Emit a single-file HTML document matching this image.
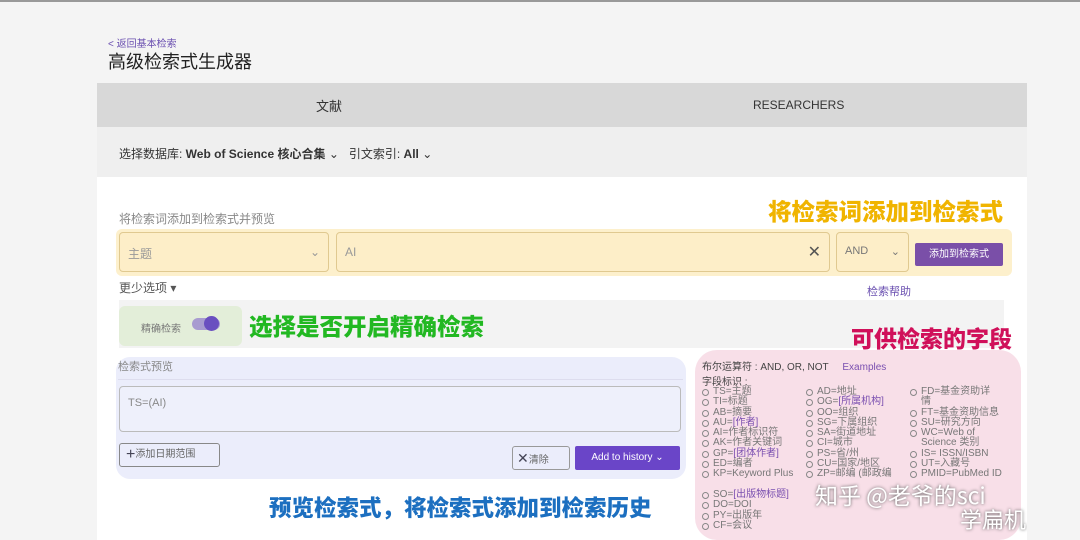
<!DOCTYPE html>
<html><head><meta charset="utf-8"><style>
*{margin:0;padding:0;box-sizing:border-box}
body{width:1080px;height:540px;overflow:hidden;background:#f4f4f4;font-family:"Liberation Sans","Noto Sans CJK SC",sans-serif;position:relative;color:#333}
.a{position:absolute}
.cn{font-family:"Noto Sans CJK SC",sans-serif}
ul{list-style:none}
li{font-size:10px;line-height:10.3px;height:10.3px;color:#777;padding-left:13px;position:relative;white-space:nowrap}
li.t{height:20.6px}
li:before{content:"";position:absolute;left:2px;top:2px;width:5px;height:5px;border:1px solid #888;border-radius:50%}
.p{color:#7a4fb0}
</style></head><body>
<div class="a" style="left:0;top:0;width:1080px;height:2px;background:#999"></div>
<div class="a" style="left:108px;top:35px;font-size:10px;color:#6a4fb0">&lt; 返回基本检索</div>
<div class="a cn" style="left:108px;top:48px;font-size:18px;color:#222">高级检索式生成器</div>
<div class="a" style="left:97px;top:83px;width:930px;height:457px;background:#fff"></div>
<div class="a" style="left:97px;top:83px;width:930px;height:44px;background:#d8d8d8"></div>
<div class="a" style="left:316px;top:96px;font-size:13px;color:#333">文献</div>
<div class="a" style="left:753px;top:98px;font-size:12px;color:#333">RESEARCHERS</div>
<div class="a" style="left:97px;top:127px;width:930px;height:50px;background:#efefef"></div>
<div class="a" style="left:119px;top:145px;font-size:12px;color:#333">选择数据库: <b>Web of Science 核心合集</b> ⌄ &nbsp; 引文索引: <b>All</b> ⌄</div>
<div class="a" style="left:119px;top:210px;font-size:12px;color:#888">将检索词添加到检索式并预览</div>
<div class="a cn" style="left:768px;top:193px;font-size:23.5px;font-weight:900;color:#f0b400;white-space:nowrap">将检索词添加到检索式</div>
<div class="a" style="left:116px;top:229px;width:896px;height:47px;background:#fdf0cc;border-radius:6px"></div>
<div class="a" style="left:119px;top:232px;width:210px;height:40px;border:1px solid #e0c990;border-radius:4px;background:#fdeec8;font-size:12px;color:#999;padding:12px 8px">主题<span style="float:right">⌄</span></div>
<div class="a" style="left:336px;top:232px;width:494px;height:40px;border:1px solid #e0c990;border-radius:4px;background:#fdeec8;font-size:12px;color:#999;padding:12px 8px">AI<span style="float:right;font-size:16px;color:#555;margin-top:-3px">✕</span></div>
<div class="a" style="left:836px;top:232px;width:73px;height:40px;border:1px solid #e0c990;border-radius:4px;background:#fdeec8;font-size:11px;color:#777;padding:12px 8px">AND<span style="float:right">⌄</span></div>
<div class="a" style="left:915px;top:243px;width:88px;height:23px;background:#7a4fa8;border-radius:2px;color:#fff;font-size:10px;text-align:center;line-height:23px">添加到检索式</div>
<div class="a" style="left:119px;top:279px;font-size:12px;color:#555">更少选项 ▾</div>
<div class="a" style="left:867px;top:283px;font-size:11px;color:#6a4fb0">检索帮助</div>
<div class="a" style="left:119px;top:300px;width:885px;height:48px;background:#f3f3f3"></div>
<div class="a" style="left:119px;top:306px;width:123px;height:40px;background:#e3eed9;border-radius:6px"></div>
<div class="a" style="left:141px;top:320px;font-size:10px;color:#777">精确检索</div>
<div class="a" style="left:192px;top:318px;width:28px;height:12px;background:#a89bd0;border-radius:6px"></div>
<div class="a" style="left:204px;top:316px;width:15px;height:15px;background:#6a4fc0;border-radius:50%"></div>
<div class="a cn" style="left:249px;top:308px;font-size:23.5px;font-weight:900;color:#22b822;white-space:nowrap">选择是否开启精确检索</div>
<div class="a cn" style="left:851px;top:320px;font-size:23px;font-weight:900;color:#d0105a;white-space:nowrap">可供检索的字段</div>
<div class="a" style="left:116px;top:357px;width:570px;height:122px;background:#ebedfb;border-radius:14px"></div>
<div class="a" style="left:118px;top:358px;font-size:11px;color:#888">检索式预览</div>
<div class="a" style="left:118px;top:379px;width:565px;height:1px;background:#dde"></div>
<div class="a" style="left:119px;top:386px;width:562px;height:46px;border:1px solid #bbb;border-radius:4px;background:#eef0fb;font-size:11px;color:#888;padding:10px 8px">TS=(AI)</div>
<div class="a" style="left:119px;top:443px;width:101px;height:24px;border:1px solid #888;border-radius:3px;font-size:10px;color:#666;line-height:22px;padding-left:6px"><span style="font-size:16px;color:#445;vertical-align:-2px">+</span>添加日期范围</div>
<div class="a" style="left:512px;top:446px;width:58px;height:24px;border:1px solid #999;border-radius:3px;font-size:10px;color:#666;line-height:22px;padding-left:4px"><span style="font-size:14px;color:#445">✕</span>清除</div>
<div class="a" style="left:575px;top:446px;width:105px;height:24px;background:#6a45c8;border-radius:2px;color:#fff;font-size:10px;line-height:24px;text-align:center">Add to history ⌄</div>
<div class="a cn" style="left:269px;top:491px;font-size:22.5px;font-weight:900;color:#1c6fc0;white-space:nowrap">预览检索式，将检索式添加到检索历史</div>
<div class="a" style="left:695px;top:350px;width:326px;height:190px;background:#f8dfe8;border-radius:22px"></div>
<div class="a" style="left:702px;top:358px;font-size:10px;color:#444">布尔运算符 : AND, OR, NOT &nbsp;&nbsp;&nbsp; <span class="p">Examples</span></div>
<div class="a" style="left:702px;top:373px;font-size:10px;color:#444">字段标识 :</div>
<ul class="a" style="left:700px;top:387px;width:100px">
<li>TS=主题</li><li>TI=标题</li><li>AB=摘要</li><li>AU=<span class="p">[作者]</span></li><li>AI=作者标识符</li><li>AK=作者关键词</li><li>GP=<span class="p">[团体作者]</span></li><li>ED=编者</li><li class="t">KP=Keyword Plus</li><li>SO=<span class="p">[出版物标题]</span></li><li>DO=DOI</li><li>PY=出版年</li><li>CF=会议</li></ul>
<ul class="a" style="left:804px;top:387px;width:100px">
<li>AD=地址</li><li>OG=<span class="p">[所属机构]</span></li><li>OO=组织</li><li>SG=下属组织</li><li>SA=街道地址</li><li>CI=城市</li><li>PS=省/州</li><li>CU=国家/地区</li><li>ZP=邮编 (邮政编</li></ul>
<ul class="a" style="left:908px;top:387px;width:100px">
<li class="t">FD=基金资助详<br>情</li><li>FT=基金资助信息</li><li>SU=研究方向</li><li class="t">WC=Web of<br>Science 类别</li><li>IS= ISSN/ISBN</li><li>UT=入藏号</li><li>PMID=PubMed ID</li></ul>
<div class="a cn" style="left:815px;top:477px;font-size:23px;color:#fff;text-shadow:0 0 3px #555">知乎 @老爷的sci</div>
<div class="a cn" style="left:960px;top:503px;font-size:22px;color:#fff;text-shadow:0 0 3px #555">学扁机</div>
<div class="a" style="left:1027px;top:83px;width:53px;height:457px;background:#f4f4f4"></div>
</body></html>
